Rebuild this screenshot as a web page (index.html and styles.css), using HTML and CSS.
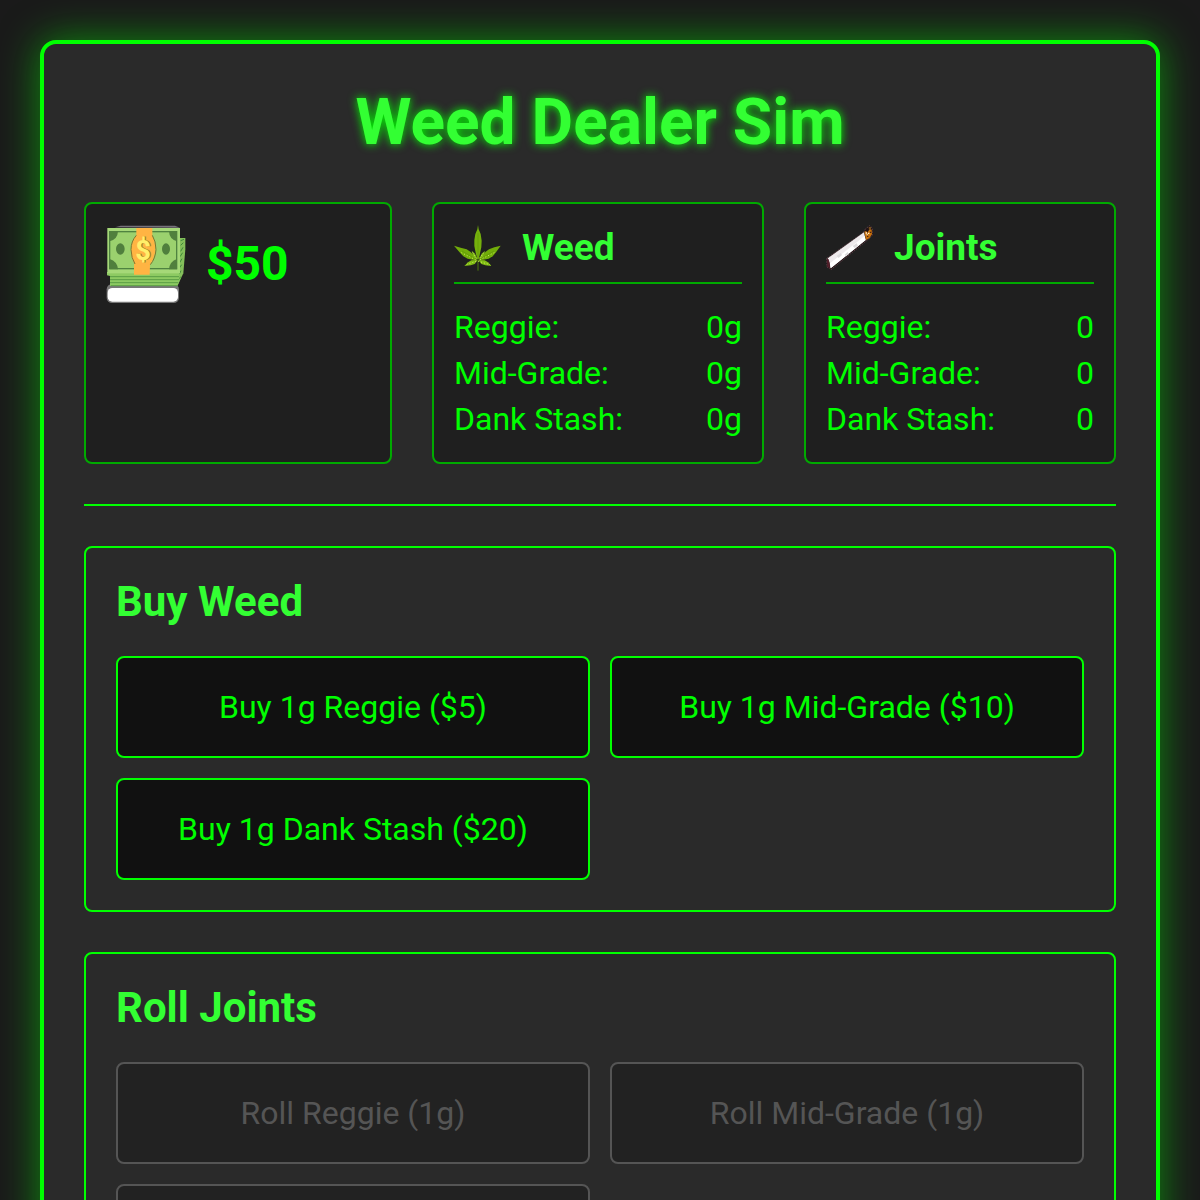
FILE: index.html
```html
<!DOCTYPE html>
<html lang="en">
<head>
    <meta charset="UTF-8">
    <meta name="viewport" content="width=device-width, initial-scale=1.0">
    <title>Weed Dealer Sim</title>
    <link rel="stylesheet" href="styles.css">
</head>
<body>
    <main class="game-container">
        <h1>Weed Dealer Sim</h1>

        <div class="stats">
            <div class="stat-box cash">
                <svg class="cash-icon" viewBox="48 42 240 240" aria-hidden="true">
                    <rect x="50" y="222" width="217" height="57" rx="16" fill="#777"/>
                    <rect x="53" y="234" width="211" height="41" rx="14" fill="#fff"/>
                    <path d="M75 52 L92 47 H255 L270 53 Z" fill="#77727a"/>
                    <path d="M266 84 H286 V118 L280 190 L264 224 H258 V84 Z" fill="#84bf5b"/>
                    <path d="M272 92 L282 88 M272 106 L280 98 M272 124 L279 112 M270 140 L278 128 M269 158 L276 146 M268 174 L275 164 M268 192 L273 182 M266 208 L272 200" stroke="#3f8a3a" stroke-width="3"/>
                    <path d="M51 186 H268 V214 L262 228 H60 V198 L51 196 Z" fill="#8dca62"/>
                    <path d="M60 200 H267 M60 209 H267 M60 218 H265 M62 227 H262" stroke="#5b9d45" stroke-width="3"/>
                    <rect x="52" y="54" width="218" height="136" fill="#a5d878"/>
                    <rect x="59" y="65" width="201" height="111" fill="#9bd16e" stroke="#4f8340" stroke-width="4"/>
                    <path d="M59 64 H84 Q83 88 59 94 Z M261 64 H237 Q238 88 261 94 Z M59 178 H84 Q82 154 59 147 Z M261 178 H237 Q239 154 261 147 Z" fill="#507f3d"/>
                    <ellipse cx="91" cy="117" rx="13" ry="17" fill="#507f3d"/>
                    <ellipse cx="228" cy="117" rx="12" ry="17" fill="#507f3d"/>
                    <path d="M139 54 H187 V79 Q195 92 196 119 Q194 145 180 164 L179 194 H132 V159 Q123 144 123 119 Q125 93 139 76 Z" fill="#ffb443"/>
                    <path d="M139 76 Q123 94 123 119 Q124 145 135 162 M187 76 Q198 94 198 119 Q196 146 181 164" fill="none" stroke="#7e7630" stroke-width="3"/>
                    <text class="cash-sign cash-sign-shade" x="163" y="150">$</text>
                    <text class="cash-sign" x="159" y="149">$</text>
                </svg>
                <span class="cash-amount">$50</span>
            </div>

            <div class="stat-box">
                <h3>
                    <svg class="stat-icon" viewBox="42 42 144 144" aria-hidden="true">
                        <path d="M114 45 L116 58 L122 72 L125 92 L124 112 L120 130 L116 148 L112 148 L107 128 L103 108 L103 90 L106 72 L112 58 Z" fill="#75b00c"/>
                        <path d="M42 107 L62 113 L80 118 L92 126 L101 135 L112 151 L98 149 L83 146 L70 139 L60 128 Z" fill="#72ad0a"/>
                        <path d="M182 107 L163 112 L147 118 L137 125 L127 135 L116 151 L130 149 L146 146 L158 139 L168 127 Z" fill="#72ad0a"/>
                        <path d="M73 168 L84 157 L94 151 L113 150 L104 162 L92 166 Z" fill="#80bc14"/>
                        <path d="M155 168 L144 157 L134 151 L115 150 L124 162 L136 166 Z" fill="#80bc14"/>
                        <path d="M95 122 L105 131 L112 148 L102 143 Z M135 122 L125 131 L117 148 L127 143 Z" fill="#86bf1c"/>
                        <path d="M114 148 V182" fill="none" stroke="#4e7c0c" stroke-width="3"/>
                        <path d="M114 70 V146 M66 123 L112 150 M162 123 L116 150" fill="none" stroke="#609708" stroke-width="2"/>
                        <path d="M64 128 L108 150 M163 128 L118 150 M80 163 L112 153 L150 164 M98 128 L110 145 M132 128 L118 145" fill="none" stroke="#cbe95c" stroke-width="3" stroke-dasharray="3 6"/>
                    </svg>
                    Weed
                </h3>
                <p><span>Reggie:</span> <span>0g</span></p>
                <p><span>Mid-Grade:</span> <span>0g</span></p>
                <p><span>Dank Stash:</span> <span>0g</span></p>
            </div>

            <div class="stat-box">
                <h3>
                    <svg class="stat-icon" viewBox="48 42 144 144" aria-hidden="true">
                        <path d="M50 145 L161 67 L166 57 L179 47 L187 54 L187 76 L175 88 L63 179 L58 175 L51 171 Z" fill="#201315" stroke="#77505a" stroke-width="2" stroke-dasharray="5 3"/>
                        <path d="M53 145 L162 67 L167 90 L62 175 L58 156 Z" fill="#eeeaec"/>
                        <path d="M60 160 L164 78 L167 90 L62 175 Z" fill="#fff"/>
                        <path d="M80 138 L92 129 L96 135 L86 144 Z M104 134 L113 126 L117 132 L108 139 Z M128 108 L140 100 L144 107 L134 114 Z" fill="#dcdadc"/>
                        <path d="M51 147 L56 148 L59 161 L60 177 L52 169 Z" fill="#55202b"/>
                        <path d="M163 66 L168 62 L172 68 L179 57 L185 59 L186 73 L178 85 L168 90 Z" fill="#c66f0c"/>
                        <path d="M176 51 L183 51 L183 57 L177 60 Z" fill="#76501c"/>
                        <path d="M171 77 H175 V81 H171 Z M180 65 H184 V69 H180 Z" fill="#4b2412"/>
                        <path d="M167 67 H171 V71 H167 Z M174 68 H178 V72 H174 Z M170 72 H173 V76 H170 Z" fill="#fff4d5"/>
                    </svg>
                    Joints
                </h3>
                <p><span>Reggie:</span> <span>0</span></p>
                <p><span>Mid-Grade:</span> <span>0</span></p>
                <p><span>Dank Stash:</span> <span>0</span></p>
            </div>
        </div>

        <hr>

        <section class="actions">
            <h2>Buy Weed</h2>
            <div class="button-grid">
                <button type="button">Buy 1g Reggie ($5)</button>
                <button type="button">Buy 1g Mid-Grade ($10)</button>
                <button type="button">Buy 1g Dank Stash ($20)</button>
            </div>
        </section>

        <section class="actions">
            <h2>Roll Joints</h2>
            <div class="button-grid">
                <button type="button" disabled>Roll Reggie (1g)</button>
                <button type="button" disabled>Roll Mid-Grade (1g)</button>
                <button type="button" disabled>Roll Dank Stash (1g)</button>
            </div>
        </section>
    </main>
</body>
</html>
```
FILE: styles.css
```css
* {
    box-sizing: border-box;
}

body {
    margin: 0;
    padding: 40px;
    background-color: #1a1a1a;
    color: #00ff00;
    font-family: Roboto, sans-serif;
    font-size: 32px;
    line-height: 38px;
}

.game-container {
    max-width: 1200px;
    margin: 0 auto;
    padding: 40px;
    background-color: #2a2a2a;
    border: 4px solid #00ff00;
    border-radius: 16px;
    box-shadow: 0 0 40px rgba(0, 255, 0, 0.5);
}

h1, h2, h3 {
    margin: 0;
    color: #33ff33;
    font-weight: 700;
}

h1 {
    margin-bottom: 40px;
    font-size: 64px;
    line-height: 78px;
    text-align: center;
    text-shadow: 0 0 10px #00ff00;
}

.stats {
    display: grid;
    grid-template-columns: 77fr 83fr 78fr;
    gap: 40px;
}

.stat-box {
    padding: 20px;
    background-color: #1f1f1f;
    border: 2px solid #00aa00;
    border-radius: 8px;
}

.cash {
    display: flex;
    align-items: flex-start;
    gap: 20px;
}

.cash-icon {
    width: 80px;
    height: 80px;
}

.cash-sign {
    fill: #fff06a;
    font-family: Roboto, sans-serif;
    font-size: 82px;
    font-weight: 700;
    text-anchor: middle;
}

.cash-sign-shade {
    fill: #9a8228;
}

.cash-amount {
    font-size: 48px;
    font-weight: 700;
    line-height: 80px;
}

.stat-box h3 {
    display: flex;
    align-items: center;
    gap: 20px;
    margin-bottom: 20px;
    padding-bottom: 10px;
    border-bottom: 2px solid #00aa00;
    font-size: 37px;
    line-height: 48px;
}

.stat-icon {
    width: 48px;
    height: 48px;
}

.stat-box p {
    display: flex;
    justify-content: space-between;
    margin: 0;
    padding: 4px 0;
}

hr {
    margin: 40px 0;
    border: 0;
    border-top: 2px solid #00ff00;
}

.actions {
    margin-bottom: 40px;
    padding: 30px;
    border: 2px solid #00ff00;
    border-radius: 8px;
}

.actions h2 {
    margin-bottom: 30px;
    font-size: 42px;
    line-height: 48px;
}

.button-grid {
    display: grid;
    grid-template-columns: repeat(auto-fill, minmax(360px, 1fr));
    gap: 20px;
}

button {
    padding: 30px;
    background-color: #111;
    color: #00ff00;
    border: 2px solid #00ff00;
    border-radius: 8px;
    font: inherit;
    cursor: pointer;
}

button:hover {
    background-color: #003300;
}

button:disabled {
    background-color: #222;
    border-color: #555;
    color: #555;
    cursor: not-allowed;
}
```
